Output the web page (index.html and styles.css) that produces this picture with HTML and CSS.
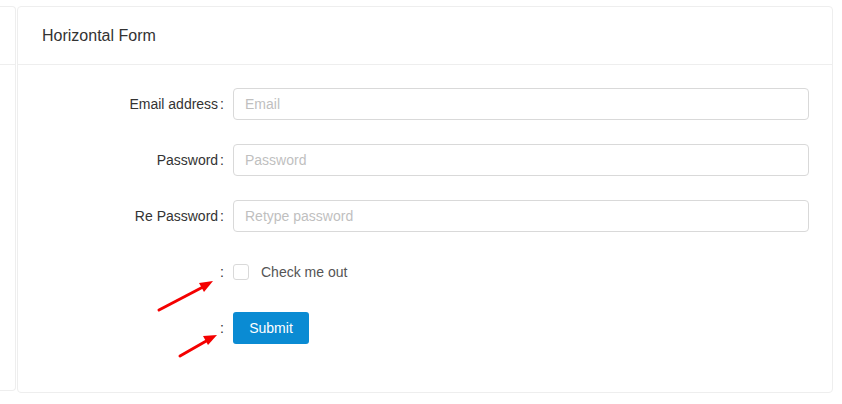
FILE: index.html
```html
<!DOCTYPE html>
<html lang="en">

<head>
    <meta charset="UTF-8">
    <meta name="viewport" content="width=device-width, initial-scale=1.0">
    <title>Horizontal Form</title>
    <link rel="stylesheet" href="styles.css">
</head>

<body>
    <div class="page">
        <div class="side-card">
            <div class="side-head"></div>
        </div>
        <div class="card">
            <div class="card-head">Horizontal Form</div>
            <form class="card-body">
                <div class="form-row">
                    <label class="form-label" for="email">Email address</label>
                    <input class="form-input" type="text" id="email" placeholder="Email">
                </div>
                <div class="form-row">
                    <label class="form-label" for="pass">Password</label>
                    <input class="form-input" type="password" id="pass" placeholder="Password">
                </div>
                <div class="form-row">
                    <label class="form-label" for="repass">Re Password</label>
                    <input class="form-input" type="password" id="repass" placeholder="Retype password">
                </div>
                <div class="form-row">
                    <span class="form-label"></span>
                    <label class="check">
                        <span class="check-box"></span>
                        <span class="check-text">Check me out</span>
                    </label>
                </div>
                <div class="form-row">
                    <span class="form-label"></span>
                    <div><button type="button" class="btn-primary">Submit</button></div>
                </div>
            </form>
        </div>
    </div>

    <svg class="marks" width="842" height="404" viewBox="0 0 842 404">
        <line x1="159" y1="310" x2="203" y2="287" stroke="#f40000" stroke-width="3" stroke-linecap="round" />
        <polygon points="213,281 199,283 204,292" fill="#f40000" />
        <line x1="180" y1="356" x2="208" y2="340" stroke="#f40000" stroke-width="3" stroke-linecap="round" />
        <polygon points="217,335 203,336 208,345" fill="#f40000" />
    </svg>
</body>

</html>
```

FILE: styles.css
```css
body {
    font-family: "Liberation Sans", Arial, sans-serif;
    font-size: 14px;
    color: #333;
    background-color: #fff;
    margin: 0;
    padding: 0;
}

.page {
    display: flex;
    align-items: flex-start;
    gap: 1px;
    padding: 6px 9px 0 0;
}

.side-card {
    width: 15px;
    height: 383px;
    border: 1px solid #eee;
    border-left: none;
    border-radius: 0 4px 4px 0;
}

.side-head {
    height: 57px;
    border-bottom: 1px solid #eee;
}

.card {
    flex: 1;
    border: 1px solid #eee;
    border-radius: 4px;
}

.card-head {
    height: 57px;
    display: flex;
    align-items: center;
    padding: 0 24px;
    font-size: 16px;
    color: #333;
    border-bottom: 1px solid #eee;
}

.card-body {
    padding: 23px 23px 24px 24px;
}

.form-row {
    display: grid;
    grid-template-columns: 191px 1fr;
    align-items: center;
    height: 32px;
    margin-bottom: 24px;
}

.form-label {
    text-align: right;
    padding-right: 9px;
    color: #333;
    white-space: nowrap;
}

.form-label::after {
    content: ":";
    margin-left: 2px;
}

.form-input {
    height: 32px;
    box-sizing: border-box;
    padding: 0 11px;
    font-family: inherit;
    font-size: 14px;
    color: #333;
    border: 1px solid #d9d9d9;
    border-radius: 4px;
    outline: none;
}

.form-input::placeholder {
    color: #bfbfbf;
}

.check {
    display: flex;
    align-items: center;
    color: #555;
}

.check-box {
    width: 16px;
    height: 16px;
    box-sizing: border-box;
    border: 1px solid #d9d9d9;
    border-radius: 3px;
    margin-right: 12px;
}

.btn-primary {
    height: 32px;
    width: 76px;
    padding: 0;
    background-color: #0a8bd3;
    color: #fff;
    border: none;
    border-radius: 3px;
    font-family: inherit;
    font-size: 14px;
    cursor: pointer;
}

.marks {
    position: absolute;
    top: 0;
    left: 0;
    pointer-events: none;
}
```
